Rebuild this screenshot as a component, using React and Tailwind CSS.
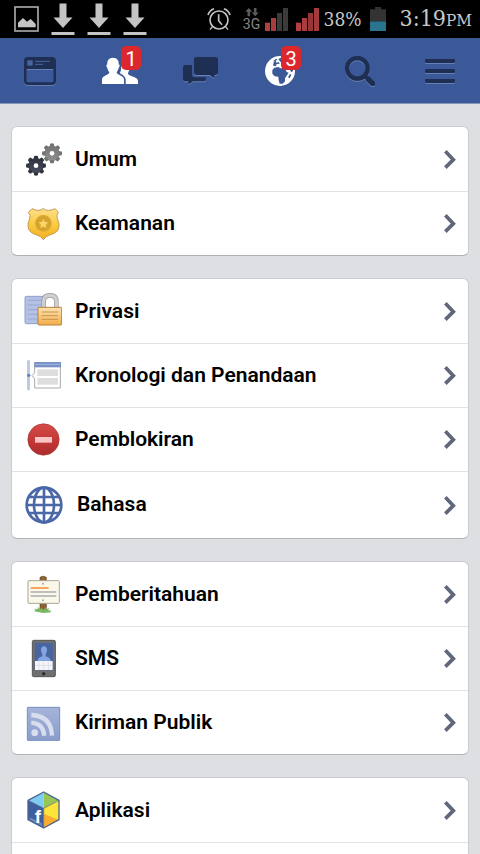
const DownloadIcon = () => (
    <svg viewBox="0 0 24 32" className="w-6 h-8" fill="#c4c4c4" aria-hidden="true">
        <path d="M8.500 0.500h7v14h6l-9.500 10.500l-9.500-10.500h6z" />
        <rect x="0.500" y="29" width="23" height="3" />
    </svg>
)

const Signal = ({ weak }) => (
    <svg viewBox="0 0 69 69" className="w-[23px] h-[23px]" aria-hidden="true">
        <rect x="0" y="44" width="15" height="25" fill="#b53f40" />
        <rect x="18" y="30" width="15" height="39" fill="#a83c3e" />
        <rect x="36" y="15" width="15" height="54" fill={weak ? '#3b3b3b' : '#9a3537'} />
        <rect x="54" y="0" width="15" height="69" fill={weak ? '#3b3b3b' : '#a33b3d'} />
    </svg>
)

const StatusBar = () => (
    <div className="flex shrink-0 justify-between h-[38px] pl-3.5 pr-2 bg-black text-[#c8c8c8]">
        <div className="flex gap-3 pt-[3px]">
            <svg viewBox="0 0 75 78" className="w-[25px] h-[26px] mt-[3px]" aria-hidden="true">
                <rect x="3" y="3" width="69" height="72" fill="none" stroke="#a8a8a8" strokeWidth="5" />
                <path d="M12 64V50l15-14 12 11 11-8 15 15v10z" fill="#c4c4c4" />
            </svg>
            <DownloadIcon />
            <DownloadIcon />
            <DownloadIcon />
        </div>
        <div className="flex items-center">
            <svg viewBox="0 0 72 72" className="w-6 h-6 mr-3" fill="none" stroke="#c4c4c4" strokeWidth="5" aria-hidden="true">
                <circle cx="36" cy="39" r="27" />
                <path d="M35 22v19l10 12M3 24Q7 10 21 5M69 24Q65 10 51 5" />
                <path d="M16 59l-7 9M56 59l7 9" strokeWidth="4" />
            </svg>
            <div className="flex flex-col items-center w-[18px] mr-1">
                <svg viewBox="0 0 42 28" className="w-3.5 h-[9px]" fill="#5b5b5b" aria-hidden="true">
                    <path d="M11 0l11 12h-7v14H7V12H0zM31 26L20 14h7V0h8v14h7z" />
                </svg>
                <span className="font-['Roboto',sans-serif] text-sm leading-[14px] text-[#858585]">3G</span>
            </div>
            <Signal weak />
            <span className="w-2" />
            <Signal />
            <span className="ml-[5px] font-['DejaVu_Serif_Condensed','DejaVu_Serif',serif] text-[19px] leading-6">38%</span>
            <svg viewBox="0 0 48 72" className="w-4 h-6 ml-2 mr-3.5" aria-hidden="true">
                <path d="M15 0h18v7h15v36H0V7h15z" fill="#333" />
                <path d="M0 43h48v29H0z" fill="#2b7490" />
            </svg>
            <span className="font-['DejaVu_Serif_Condensed','DejaVu_Serif',serif] text-[23px] leading-7">
                3:19<span className="text-[17px]">PM</span>
            </span>
        </div>
    </div>
)

const Badge = ({ children }) => (
    <span className="absolute left-1/2 top-2 ml-px w-5 h-6 rounded-[5px] bg-[#dc282c] text-white text-xl leading-[26px] text-center">
        {children}
    </span>
)

const navShadow = 'drop-shadow-[0_1px_0_#6580b5]'

const navItems = [
    {
        label: 'Kabar Berita',
        icon: (
            <svg viewBox="0 0 96 84" className={`w-8 h-7 ${navShadow}`}>
                <rect x="4" y="4" width="88" height="76" rx="8" fill="none" stroke="#1f2f54" strokeWidth="8" />
                <path d="M4 4h88v32H4z" fill="#1f2f54" />
                <path d="M10 10h16v16H10z" fill="#4a65a0" />
                <path d="M33 13h45M33 22h24" stroke="#4a65a0" strokeWidth="3" />
            </svg>
        ),
    },
    {
        label: 'Permintaan Pertemanan',
        badge: '1',
        icon: (
            <svg viewBox="0 0 108 84" className="w-9 h-7" fill="#fff">
                <path d="M61 7c13-5 23 2 22 19 3 2 3 8-1 13-3 6-4 9-4 12 4 8 29 7 30 21v9H66c1-17-1-20-15-29 3-5 6-9 6-17-1-12 2-20 4-28z" />
                <path d="M33 2c13 0 18 9 17 20 4 1 4 6 0 11-2 7-5 10-6 14 2 7 21 8 22 20v14H0V67c1-12 20-13 22-20-1-4-5-7-6-14-4-5-4-10 0-11C15 11 20 2 33 2z" stroke="#3b5998" strokeWidth="10" paintOrder="stroke" />
            </svg>
        ),
    },
    {
        label: 'Pesan',
        icon: (
            <svg viewBox="0 0 105 84" className={`w-[35px] h-7 ${navShadow}`} fill="#1f2f54">
                <path d="M41 0h56q8 0 8 8v38q0 8-8 8h-3v10L80 54H41q-8 0-8-8V8q0-8 8-8z" />
                <path d="M27 24v30q0 7 7 7h35v5q0 7-7 7H30L16 83V73H8q-8 0-8-8V32q0-8 8-8z" />
            </svg>
        ),
    },
    {
        label: 'Pemberitahuan',
        badge: '3',
        icon: (
            <svg viewBox="0 0 90 90" className="w-[30px] h-[30px]">
                <circle cx="45" cy="45" r="45" fill="#fff" />
                <path d="M22 42l6-7 12-2 6 4 14-1 5 12 6 2-7 11-4 6v9l-7 7h-9l-3-10-1-11-11-1-7-8z" fill="#3b5998" />
                <path d="M24 29l2-10 6-4 3 5 7-2 2 5-9 1-2 6zM40 9l8-4 4 4 9-2-1 8-8 5-6-3zM51 25l9-4 16-3 9 14-8 2-5-5-8 4-11-3z" fill="#3b5998" />
                <path d="M74 36l8-1 2 10-5 4-3-5zM69 64l6-10 4 2-5 11zM24 16l9-8 4 1-6 8z" fill="#3b5998" />
            </svg>
        ),
    },
    {
        label: 'Cari',
        icon: (
            <svg viewBox="0 0 90 90" className={`w-[30px] h-[30px] ${navShadow}`} fill="none" stroke="#1f2f54">
                <circle cx="37" cy="37" r="31" strokeWidth="13" />
                <path d="M61 61l8 8" strokeWidth="12" />
                <path d="M70 70l13 13" strokeWidth="16" strokeLinecap="round" />
            </svg>
        ),
    },
    {
        label: 'Menu',
        icon: (
            <svg viewBox="0 0 90 72" className={`w-[30px] h-6 ${navShadow}`} fill="#1f2f54">
                <rect y="0" width="90" height="12" rx="4" />
                <rect y="30" width="90" height="12" rx="4" />
                <rect y="60" width="90" height="12" rx="4" />
            </svg>
        ),
    },
]

const NavBar = () => (
    <nav className="grid grid-cols-6 shrink-0 h-[66px] bg-[#3b5998] border-b border-[#8796bd]">
        {navItems.map((item) => (
            <button key={item.label} type="button" aria-label={item.label} className="relative flex justify-center items-center">
                {item.icon}
                {item.badge && <Badge>{item.badge}</Badge>}
            </button>
        ))}
    </nav>
)

const teeth = [0, 45, 90, 135, 180, 225, 270, 315]

const Gear = ({ cx, cy, fill }) => (
    <g transform={`translate(${cx} ${cy})`}>
        <circle r="23" fill={fill} />
        {teeth.map((angle) => (
            <path key={angle} d="M-7-20l1.500-9q5.500-2 11 0l1.500 9z" fill={fill} transform={`rotate(${angle})`} />
        ))}
        <circle r="7" fill="#fff" />
    </g>
)

const icons = {
    gears: (
        <svg viewBox="72 57 114 123">
            <defs>
                <linearGradient id="gearDark" gradientUnits="userSpaceOnUse" x1="0" y1="-29" x2="0" y2="29">
                    <stop stopColor="#2d303a" />
                    <stop offset="1" stopColor="#4a5164" />
                </linearGradient>
                <linearGradient id="gearLight" gradientUnits="userSpaceOnUse" x1="0" y1="-29" x2="0" y2="29">
                    <stop stopColor="#707070" />
                    <stop offset="1" stopColor="#949494" />
                </linearGradient>
            </defs>
            <Gear cx={156} cy={100} fill="url(#gearLight)" />
            <Gear cx={108} cy={137} fill="url(#gearDark)" />
        </svg>
    ),
    shield: (
        <svg viewBox="72 249 114 123">
            <defs>
                <linearGradient id="gold" x1="0" y1="0" x2="0" y2="1">
                    <stop stopColor="#fde08a" />
                    <stop offset="0.5" stopColor="#f9cb45" />
                    <stop offset="1" stopColor="#f4ae1d" />
                </linearGradient>
            </defs>
            <path d="M130 265q8 9 24 5 5-1 11-4l10 11q-8 9-2 22 4 8 4 18 0 20-25 27-15 4-22 15-7-11-22-15-24-7-24-27 0-10 4-18 6-13-3-22l11-11q6 3 11 4 15 4 23-5z" fill="url(#gold)" stroke="#c49a4c" strokeWidth="3" strokeLinejoin="round" />
            <circle cx="130" cy="310" r="25" fill="#d9a72f" />
            <circle cx="130" cy="310" r="18" fill="none" stroke="#c89a2e" strokeWidth="2" />
            <path d="M130 297l4 9 10 1-7 7 2 10-9-5-9 5 2-10-7-7 10-1z" fill="#fbd668" />
        </svg>
    ),
    lock: (
        <svg viewBox="72 63 114 123">
            <defs>
                <linearGradient id="padlock" x1="0" y1="0" x2="0" y2="1">
                    <stop stopColor="#fde3b0" />
                    <stop offset="1" stopColor="#f4ad4a" />
                </linearGradient>
            </defs>
            <rect x="75" y="79" width="61" height="82" rx="4" fill="#b4c1e2" stroke="#8b9fcf" strokeWidth="3" />
            <path d="M83 91h44M83 105h44M83 119h44M83 133h44M83 147h44" stroke="#97a9d6" strokeWidth="3" />
            <path d="M131 112V94q0-18 19-18t19 18v18" fill="#fff" stroke="#999" strokeWidth="14" />
            <path d="M131 112V94q0-18 19-18t19 18v18" fill="none" stroke="#cfcfcf" strokeWidth="10" />
            <rect x="114" y="112" width="71" height="53" rx="3" fill="url(#padlock)" stroke="#b4803c" strokeWidth="3" />
            <path d="M125 126h49M125 137h49M125 148h49" stroke="#bd8a49" strokeWidth="2.500" />
        </svg>
    ),
    timeline: (
        <svg viewBox="72 255 114 123">
            <rect x="81" y="271" width="9" height="90" rx="2" fill="#bdc9e5" />
            <circle cx="86" cy="316" r="5" fill="#5f7fbf" />
            <path d="M104 278h77v76h-77v-28l-8-9 8-9z" fill="#fff" stroke="#a9a9a9" strokeWidth="3" strokeLinejoin="round" />
            <rect x="103" y="276" width="80" height="16" fill="#7790c6" />
            <path d="M106 283h74" stroke="#a5b7df" strokeWidth="3" />
            <rect x="112" y="298" width="62" height="20" fill="#dedede" />
            <rect x="112" y="324" width="62" height="20" fill="#dedede" />
        </svg>
    ),
    block: (
        <svg viewBox="72 42 114 123">
            <defs>
                <linearGradient id="red" x1="0" y1="0" x2="0" y2="1">
                    <stop stopColor="#d64b47" />
                    <stop offset="1" stopColor="#ae2a2b" />
                </linearGradient>
            </defs>
            <circle cx="130.500" cy="103.500" r="47" fill="url(#red)" stroke="#a93a33" strokeWidth="2" />
            <rect x="105" y="96" width="51" height="17" fill="#f8c4c4" />
        </svg>
    ),
    globe: (
        <svg viewBox="72 240 120 120" fill="none" stroke="#4a68a8" strokeWidth="8">
            <circle cx="132" cy="300" r="52" />
            <ellipse cx="132" cy="300" rx="30" ry="52" />
            <path d="M132 248v104M80 300h104M87 276h90M87 324h90" />
        </svg>
    ),
    sign: (
        <svg viewBox="72 72 114 123">
            <path d="M120 82q9-7 19 0v99h-19z" fill="#8b6235" stroke="#6c4a27" strokeWidth="2" />
            <path d="M102 184l5-5-5-3 12 1-1-6 9 7 1-5 8 7 6-8 3 6 7-5-2 8 10 1-5 4 4 1-24 2z" fill="#79b765" />
            <rect x="84" y="92" width="94" height="68" rx="2" fill="#fbf8ea" stroke="#a9a696" strokeWidth="3" />
            <path d="M92 114h54" stroke="#f7a55f" strokeWidth="6" />
            <path d="M92 126h77M92 138h77" stroke="#bebebe" strokeWidth="6" />
            <circle cx="129" cy="101" r="3" fill="#a9a9a9" />
            <circle cx="129" cy="151" r="3" fill="#a9a9a9" />
        </svg>
    ),
    phone: (
        <svg viewBox="72 264 114 123">
            <rect x="97" y="271" width="69" height="109" rx="4" fill="#6f6f6f" stroke="#555" strokeWidth="3" />
            <rect x="104" y="279" width="55" height="82" fill="#49659f" />
            <path d="M112 333q1-10 15-14v-7q-4-6-4-12 0-11 9-11t9 11q0 6-4 12v7q14 4 15 14z" fill="#84a5e2" />
            <path d="M105 333h53v27h-53z" fill="#f6f6f9" />
            <path d="M117 333v27M131 333v27M145 333v27M105 346h53" stroke="#dadce5" strokeWidth="2.500" />
            <circle cx="131" cy="371" r="5" fill="#292929" />
        </svg>
    ),
    feed: (
        <svg viewBox="72 51 114 123">
            <defs>
                <linearGradient id="feedBg" x1="0" y1="0" x2="0" y2="1">
                    <stop stopColor="#a6b4d8" />
                    <stop offset="1" stopColor="#899dcc" />
                </linearGradient>
            </defs>
            <rect x="82" y="67" width="97" height="99" rx="1" fill="url(#feedBg)" stroke="#758dc2" strokeWidth="3" />
            <circle cx="104" cy="143" r="10" fill="#d8deed" />
            <path d="M94 113q35 2 39 39M94 90q59 2 62 62" fill="none" stroke="#d8deed" strokeWidth="13" />
        </svg>
    ),
    cube: (
        <svg viewBox="72 315 114 123">
            <path d="M131 321l-47 25 47 24z" fill="#7ccdf0" />
            <path d="M131 321l46 25-46 24z" fill="#98c654" />
            <path d="M84 346l47 24v59l-47-25z" fill="#3f5e9e" />
            <path d="M131 370l46-24v58l-46 25z" fill="#fee438" />
            <path d="M131 386l46 19-46 24z" fill="#fbae2c" />
            <path d="M89 397l37 18v8l-37-19z" fill="#7189ba" />
            <path d="M131 321l46 25v58l-46 25-47-25v-58z" fill="none" stroke="#4b6492" strokeWidth="4" strokeLinejoin="round" />
            <path d="M84 346l47 24 46-24M131 370v59" fill="none" stroke="#3f5e86" strokeWidth="2" />
            <text x="104" y="413" fontFamily="'Liberation Sans', sans-serif" fontWeight="700" fontSize="56" fill="#fff">f</text>
        </svg>
    ),
}

const groups = [
    [
        { label: 'Umum', icon: 'gears' },
        { label: 'Keamanan', icon: 'shield' },
    ],
    [
        { label: 'Privasi', icon: 'lock' },
        { label: 'Kronologi dan Penandaan', icon: 'timeline' },
        { label: 'Pemblokiran', icon: 'block' },
        { label: 'Bahasa', icon: 'globe', large: true },
    ],
    [
        { label: 'Pemberitahuan', icon: 'sign' },
        { label: 'SMS', icon: 'phone' },
        { label: 'Kiriman Publik', icon: 'feed' },
    ],
    [{ label: 'Aplikasi', icon: 'cube' }],
]

const SettingRow = ({ item }) => (
    <li>
        <a href="#" className={`flex items-center px-3 ${item.large ? 'h-[66px]' : 'h-[63px]'}`}>
            <span className={`shrink-0 *:w-full *:h-full ${item.large ? 'w-10 h-10' : 'w-[38px] h-[41px]'}`} aria-hidden="true">
                {icons[item.icon]}
            </span>
            <span className="flex-1 ml-[13px] pb-0.5 text-[21px] leading-7 font-semibold text-black">{item.label}</span>
            <svg viewBox="0 0 36 57" className="w-3 h-[19px]" fill="none" stroke="#5f687b" strokeWidth="11" aria-hidden="true">
                <path d="M4 4l24 25L4 53" />
            </svg>
        </a>
    </li>
)

const App = () => {
    return (
        <div className="flex flex-col h-screen bg-[#dddfe3] font-['Roboto',sans-serif]">
            <StatusBar />
            <NavBar />
            <main className="flex flex-col flex-1 gap-[22px] px-[11px] pt-[22px] overflow-y-auto [scrollbar-width:none]">
                {groups.map((items, index) => (
                    <ul key={index} className="shrink-0 pt-px bg-white border border-[#c9cbd0] border-b-[#b0b2b8] rounded-md divide-y divide-[#e2e2e4]">
                        {items.map((item) => (
                            <SettingRow key={item.label} item={item} />
                        ))}
                        {/* space for the rest of the last group */}
                        {index === groups.length - 1 && <li className="h-16" />}
                    </ul>
                ))}
            </main>
        </div>
    )
}

export default App
